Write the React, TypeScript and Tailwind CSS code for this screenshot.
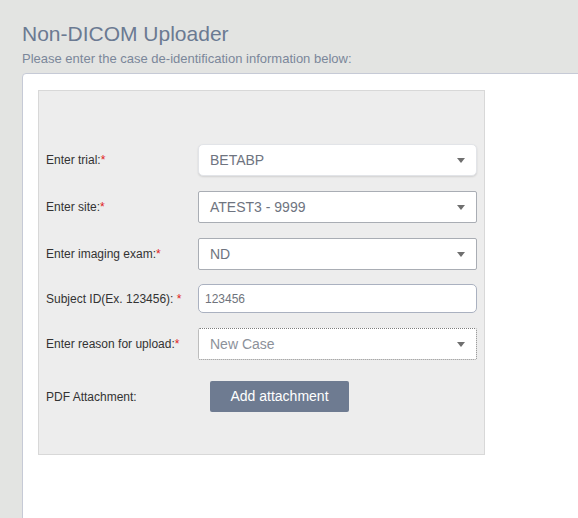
import React from "react";

const font = { fontFamily: '"Liberation Sans", Arial, sans-serif' };

function Caret() {
  return <span className="h-0 w-0 border-x-[4.5px] border-t-[5px] border-x-transparent border-t-[#6f6f6f]" />;
}

function Label({ text, required = true, spaced = false }: { text: string; required?: boolean; spaced?: boolean }) {
  return (
    <div className="w-[152px] shrink-0 text-[12px] text-[#333]">
      {text}
      {required && <span className="text-[#e02020]">{spaced ? " *" : "*"}</span>}
    </div>
  );
}

function Select({ value, variant }: { value: string; variant: "soft" | "plain" | "focus" }) {
  const box =
    variant === "soft"
      ? "rounded-[5px] border border-[#e2e4e8] shadow-[0_1px_2px_rgba(0,0,0,0.12)]"
      : variant === "plain"
      ? "rounded-[2px] border border-[#a9adb4]"
      : "rounded-[2px] border border-dotted border-[#7d7d7d]";
  return (
    <div className={`flex h-[32px] w-[279px] items-center justify-between bg-white pl-[11px] pr-[11px] ${box}`}>
      <span className={`text-[14px] ${variant === "focus" ? "text-[#8c919a]" : "text-[#6e7480]"}`}>{value}</span>
      <Caret />
    </div>
  );
}

export default function App() {
  return (
    <div className="h-[518px] w-[578px] overflow-hidden bg-[#e3e4e2]" style={font}>
      <h1 className="ml-[22px] mt-[22px] text-[21px] leading-[24px] text-[#6b7a92]">Non-DICOM Uploader</h1>
      <p className="ml-[22px] mt-[5px] text-[13px] leading-[15px] text-[#7b879a]">
        Please enter the case de-identification information below:
      </p>
      <div className="ml-[22px] mt-[7px] h-[500px] w-[600px] rounded-tl-[4px] border border-[#c6cad6] bg-white pl-[15px] pt-[16px]">
        <div className="w-[447px] border border-[#d8d8d8] bg-[#ededed] pb-[42px] pl-[7px] pt-[53px]">
          <div className="flex items-center">
            <Label text="Enter trial:" />
            <Select value="BETABP" variant="soft" />
          </div>
          <div className="mt-[15px] flex items-center">
            <Label text="Enter site:" />
            <Select value="ATEST3 - 9999" variant="plain" />
          </div>
          <div className="mt-[15px] flex items-center">
            <Label text="Enter imaging exam:" />
            <Select value="ND" variant="plain" />
          </div>
          <div className="mt-[14px] flex items-center">
            <Label text="Subject ID(Ex. 123456):" spaced />
            <input
              readOnly
              value="123456"
              className="h-[29px] w-[279px] rounded-[5px] border border-[#aab1c0] bg-white px-[6px] text-[12px] text-[#6f747c] outline-none"
              style={font}
            />
          </div>
          <div className="mt-[15px] flex items-center">
            <Label text="Enter reason for upload:" />
            <Select value="New Case" variant="focus" />
          </div>
          <div className="mt-[21px] flex items-center">
            <Label text="PDF Attachment:" required={false} />
            <button
              className="ml-[12px] h-[31px] w-[139px] rounded-[2px] bg-[#6e7b91] text-[14px] text-white"
              style={font}
            >
              Add attachment
            </button>
          </div>
        </div>
      </div>
    </div>
  );
}
